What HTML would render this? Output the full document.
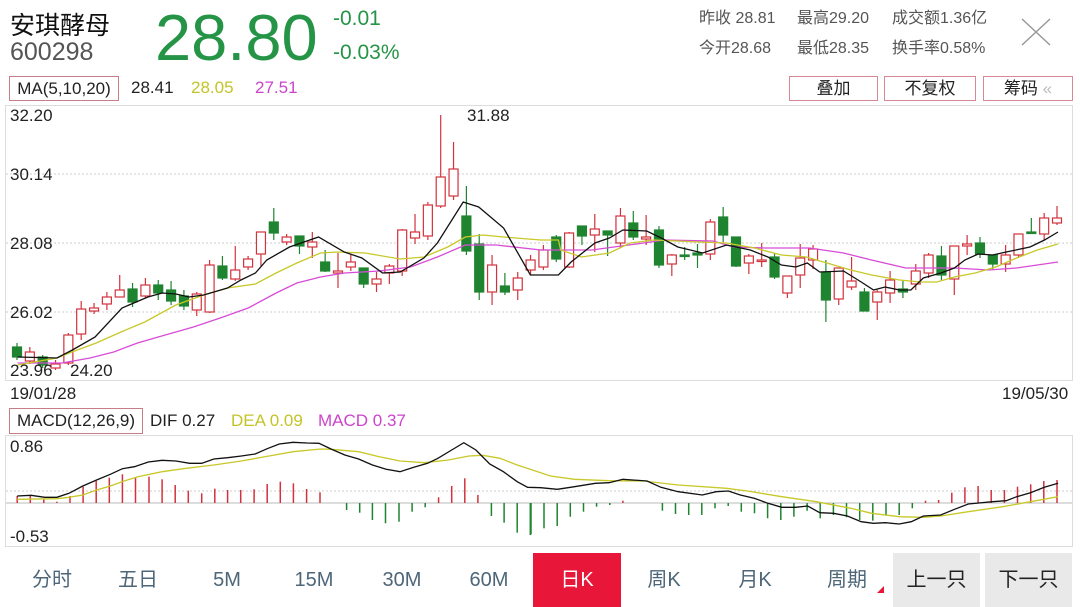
<!DOCTYPE html>
<html><head><meta charset="utf-8">
<style>
body{margin:0;width:1080px;height:607px;background:#fff;font-family:"Liberation Sans","Noto Sans CJK SC",sans-serif;position:relative;overflow:hidden}
.a{position:absolute;white-space:nowrap}
.btn{position:absolute;top:76px;height:23px;border:1px solid #d88894;font-size:17px;line-height:23px;text-align:center;color:#222}
.tab{position:absolute;top:553px;height:54px;line-height:54px;width:88px;text-align:center;font-size:20px;color:#4d6678}
.inf{position:absolute;white-space:nowrap;font-size:16px;color:#555;line-height:20px}
</style></head><body>
<div class="a" style="left:10px;top:6px;font-size:25px;color:#111">安琪酵母</div>
<div class="a" style="left:10px;top:38px;font-size:25px;color:#555">600298</div>
<div class="a" style="left:155px;top:0px;font-size:65px;color:#259446">28.80</div>
<div class="a" style="left:333px;top:7px;font-size:21px;color:#259446">-0.01</div>
<div class="a" style="left:333px;top:41px;font-size:21px;color:#259446">-0.03%</div>
<div class="inf" style="left:699px;top:9px">昨收 28.81</div>
<div class="inf" style="left:797px;top:9px">最高29.20</div>
<div class="inf" style="left:892px;top:9px">成交额1.36亿</div>
<div class="inf" style="left:699px;top:39px">今开28.68</div>
<div class="inf" style="left:797px;top:39px">最低28.35</div>
<div class="inf" style="left:892px;top:39px">换手率0.58%</div>
<svg class="a" style="left:1020px;top:17px" width="32" height="30"><path d="M2 2L30 28M30 2L2 28" stroke="#999" stroke-width="1.5"/></svg>
<div class="a" style="left:9px;top:76px;width:108px;height:23px;border:1px solid #c87e88;font-size:17px;line-height:23px;text-align:center;color:#222">MA(5,10,20)</div>
<div class="a" style="left:131px;top:78px;font-size:17px;color:#222">28.41</div>
<div class="a" style="left:191px;top:78px;font-size:17px;color:#c4c428">28.05</div>
<div class="a" style="left:255px;top:78px;font-size:17px;color:#cc44cc">27.51</div>
<div class="btn" style="left:789px;width:87px">叠加</div>
<div class="btn" style="left:884px;width:90px">不复权</div>
<div class="btn" style="left:983px;width:88px">筹码 <span style="color:#bbb">«</span></div>
<svg class="a" style="left:0;top:0" width="1080" height="607" id="ch"></svg>
<div class="a" style="left:10px;top:106px;font-size:17px;color:#222">32.20</div>
<div class="a" style="left:10px;top:165px;font-size:17px;color:#222">30.14</div>
<div class="a" style="left:10px;top:234px;font-size:17px;color:#222">28.08</div>
<div class="a" style="left:10px;top:303px;font-size:17px;color:#222">26.02</div>
<div class="a" style="left:10px;top:361px;font-size:17px;color:#222">23.96</div>
<div class="a" style="left:70px;top:361px;font-size:17px;color:#222">24.20</div>
<div class="a" style="left:467px;top:106px;font-size:17px;color:#222">31.88</div>
<div class="a" style="left:10px;top:384px;font-size:17px;color:#222">19/01/28</div>
<div class="a" style="left:1002px;top:384px;font-size:17px;color:#222">19/05/30</div>
<div class="a" style="left:9px;top:408px;width:132px;height:24px;border:1px solid #c87e88;font-size:17px;line-height:24px;text-align:center;color:#222">MACD(12,26,9)</div>
<div class="a" style="left:150px;top:411px;font-size:17px;color:#222">DIF 0.27</div>
<div class="a" style="left:231px;top:411px;font-size:17px;color:#c4c428">DEA 0.09</div>
<div class="a" style="left:318px;top:411px;font-size:17px;color:#cc44cc">MACD 0.37</div>
<div class="a" style="left:10px;top:437px;font-size:17px;color:#222">0.86</div>
<div class="a" style="left:10px;top:527px;font-size:17px;color:#222">-0.53</div>
<div class="tab" style="left:8px">分时</div>
<div class="tab" style="left:94px">五日</div>
<div class="tab" style="left:183px">5M</div>
<div class="tab" style="left:270px">15M</div>
<div class="tab" style="left:358px">30M</div>
<div class="tab" style="left:445px">60M</div>
<div class="tab" style="left:533px;background:#e8173a;color:#fff">日K</div>
<div class="tab" style="left:620px">周K</div>
<div class="tab" style="left:711px">月K</div>
<div class="tab" style="left:803px">周期</div>
<svg class="a" style="left:877px;top:586px" width="8" height="8"><path d="M7 0V7H0Z" fill="#e8173a"/></svg>
<div class="tab" style="left:893px;width:87px;background:#e9e9e9;color:#222">上一只</div>
<div class="tab" style="left:985px;width:87px;background:#e9e9e9;color:#222">下一只</div>
<script>
var s='';
function L(x1,y1,x2,y2,c,w,d){s+='<line x1="'+x1+'" y1="'+y1+'" x2="'+x2+'" y2="'+y2+'" stroke="'+c+'" stroke-width="'+(w||1)+'"'+(d?' stroke-dasharray="'+d+'"':'')+'/>';}
s+='<rect x="5.5" y="105.5" width="1067" height="275" fill="none" stroke="#ddd"/>';
s+='<rect x="5.5" y="435.5" width="1067" height="111" fill="none" stroke="#ddd"/>';
[174,243,312].forEach(function(y){L(6,y,1072,y,'#ccc',1,'2,2');});
L(6,491,1072,491,'#ccc',1,'2,2');
L(6,503,1072,503,'#bbb',1);
var C=[['G',347,357,343,360],['R',352,361,347,364],['G',357,365,355,368],['R',364,368,360,370],['R',335,363,333,365],['R',309,334,301,340],['R',308,311,303,314],['R',297,304,292,310],['R',290,297,275,297],['G',289,302,283,307],['R',285,296,278,298],['G',285,293,280,300],['G',290,301,281,305],['G',296,306,290,310],['R',294,310,292,316],['R',265,312,260,313],['G',266,278,256,280],['R',270,279,246,281],['R',259,267,256,270],['R',232,254,232,266],['G',222,233,208,240],['R',237,242,234,245],['G',236,246,236,254],['R',242,247,232,258],['G',262,271,250,272],['R',271,273,253,288],['R',262,267,255,271],['G',268,284,268,288],['R',279,284,272,292],['R',266,273,264,284],['R',230,271,229,276],['R',232,238,214,244],['R',205,236,202,240],['R',177,206,115,208],['R',169,196,142,200],['G',216,251,186,255],['G',244,292,234,300],['R',265,292,255,305],['G',286,292,273,295],['R',278,290,272,300],['R',260,270,255,275],
['R',250,267,245,270],['G',237,259,235,262],['R',233,267,232,268],['G',226,236,226,245],['R',229,235,214,252],['G',231,235,231,256],['R',216,243,208,248],['G',223,237,211,240],['R',237,239,215,245],['G',230,265,226,268],['R',255,264,254,276],['G',255,256,247,260],['G',253,255,244,268],['R',222,254,219,260],['G',217,235,207,242],['G',237,266,237,267],['R',256,263,254,274],['R',260,261,243,267],['G',257,277,253,279],['R',276,293,276,298],['R',258,275,244,288],['R',249,260,245,269],['G',272,300,260,322],['R',268,299,268,305],['R',281,287,257,290],['G',292,311,288,311],['R',292,302,290,320],['R',280,293,271,303],['G',289,292,281,298],['R',271,284,264,290],['R',255,273,253,278],['G',256,275,246,280],['R',246,279,246,295],['R',244,246,235,255],['G',243,254,237,258],['G',255,264,255,270],['R',255,264,245,272],['R',234,255,234,258],['G',232,233,218,234],['R',218,234,213,240],['R',218,223,206,225]];
var sp=(1057-17)/(C.length-1);
C.forEach(function(c,i){var x=17+i*sp;var col=c[0]=='R'?'#d2323c':'#1f8430';
L(x,c[3],x,c[4],col,1.2);
var h=Math.max(c[2]-c[1],1.5);
s+='<rect x="'+(x-4.5)+'" y="'+c[1]+'" width="9" height="'+h+'" fill="'+(c[0]=='R'?'#fff':col)+'" stroke="'+col+'" stroke-width="1.2"/>';});
function P(a,c,w){s+='<polyline fill="none" stroke="'+c+'" stroke-width="'+(w||1.3)+'" points="'+a.map(function(p){return p.join(',')}).join(' ')+'"/>';}
function fx(a){return a.map(function(p){var x=p[0];x=x<=540?x*1.034:540+(x-540)*1.036;return [x.toFixed(1),p[1]];});}
P(fx([[17,363],[60,363],[87,358],[110,352],[133,343],[153,337],[187,327],[213,318],[240,308],[267,293],[287,283],[310,277],[333,273],[367,271],[397,267],[423,257],[450,245],[480,245],[523,250],[540,250],[590,250],[640,243],[660,240],[707,241],[727,247],[757,248],[800,248],[833,253],[860,260],[893,268],[940,268],[973,270],[1000,268],[1020,265],[1040,262]]),'#d84cd8');
P(fx([[17,365],[55,358],[67,353],[93,343],[117,332],[140,322],[170,305],[197,295],[220,288],[247,284],[267,273],[287,263],[310,253],[327,252],[353,253],[387,259],[410,257],[433,247],[450,237],[467,235],[487,237],[523,240],[540,240],[560,250],[580,257],[607,253],[627,243],[650,240],[693,242],[720,243],[747,248],[773,255],[797,257],[817,263],[840,270],[860,275],[887,280],[907,282],[923,282],[940,277],[960,273],[980,267],[1000,258],[1020,250],[1040,244]]),'#c8c828');
P(fx([[17,357],[55,358],[70,350],[92,337],[118,308],[143,297],[157,293],[170,294],[183,297],[197,295],[220,288],[233,280],[247,273],[258,260],[280,247],[308,237],[333,252],[350,258],[370,273],[387,272],[410,258],[423,243],[448,202],[463,207],[487,228],[513,275],[540,275],[570,262],[593,243],[607,238],[620,230],[643,231],[657,238],[673,247],[697,253],[720,245],[743,250],[760,257],[773,265],[787,267],[798,263],[810,272],[833,271],[850,282],[862,290],[873,287],[887,290],[898,290],[910,278],[927,273],[940,268],[950,260],[963,254],[977,255],[990,252],[1013,247],[1027,240],[1040,232]]),'#111');
var LB=[[50,348],[88,346],[127,358],[165,365],[203,348],[241,320],[279,303],[317,293],[355,283],[393,292],[432,290],[470,298],[508,315],[546,332],[585,340],[623,326],[660,330],[698,330],[737,328],[775,312],[813,305],[851,310],[889,327],[928,337],[965,368],[1005,390],[1043,398],[1080,420],[1118,430],[1157,425],[1195,395],[1233,382],[1272,352],[1310,318],[1348,295],[1386,345],[1425,408],[1462,428],[1500,458],[1538,465]];
var RB=[445,438,410,395,380,375,362,368,370,392,402,405,405,385,378,395,400,415,420,410,392,415,405,412,420,422,407,405,385,362,360,338,322,318,330,330,320,313,303,300];
function bar(x,zy){var y=380+zy/3;var col=y<503?'#d2323c':'#1f8430';if(Math.abs(y-503)<0.5)return;L(x.toFixed(1),503,x.toFixed(1),y.toFixed(1),col,1.5);}
LB.forEach(function(b){bar(b[0]/2.9,b[1]);});
bar(531,463);
RB.forEach(function(v,i){bar(544+i*(1057-544)/39,v);});
function mp(a,left){return a.map(function(p){var x=left?p[0]/2.9:540+p[0]/2.895;return [x.toFixed(1),(380+p[1]/3).toFixed(1)];});}
var DEA=mp([[50,358],[165,356],[200,352],[240,345],[280,330],[320,318],[360,303],[400,290],[470,275],[540,265],[620,255],[700,243],[780,228],[850,215],[930,207],[960,208],[1040,215],[1100,230],[1160,243],[1230,248],[1300,240],[1360,228],[1400,226],[1450,235],[1500,255],[1568,278]],1).concat(mp([[30,288],[100,298],[200,302],[300,303],[400,315],[540,325],[600,333],[700,350],[800,365],[900,385],[960,400],[1040,410],[1110,412],[1160,408],[1240,395],[1340,380],[1420,365],[1500,350]],0));
var DIF=mp([[50,348],[90,346],[130,352],[165,352],[200,340],[240,318],[280,300],[320,283],[355,266],[390,260],[430,246],[470,241],[510,243],[550,250],[585,250],[620,237],[660,233],[700,228],[740,222],[775,206],[810,192],[850,187],[890,189],[925,190],[960,207],[1000,225],[1040,237],[1080,255],[1120,268],[1160,275],[1200,262],[1240,250],[1270,235],[1310,210],[1345,188],[1380,210],[1420,252],[1460,275],[1500,305],[1530,322],[1568,323]],1).concat(mp([[50,328],[100,320],[160,310],[200,308],[240,298],[310,303],[350,322],[400,335],[470,345],[510,335],[545,333],[580,345],[620,355],[660,370],[700,382],[740,382],[775,378],[810,398],[850,400],[890,408],[930,425],[965,430],[1000,428],[1040,432],[1075,425],[1110,408],[1160,405],[1200,388],[1240,372],[1310,365],[1350,362],[1380,350],[1420,338],[1460,322],[1500,310]],0));
P(DEA,'#c8c828',1.3);P(DIF,'#111',1.3);
document.getElementById('ch').innerHTML=s;
</script>
</body></html>
